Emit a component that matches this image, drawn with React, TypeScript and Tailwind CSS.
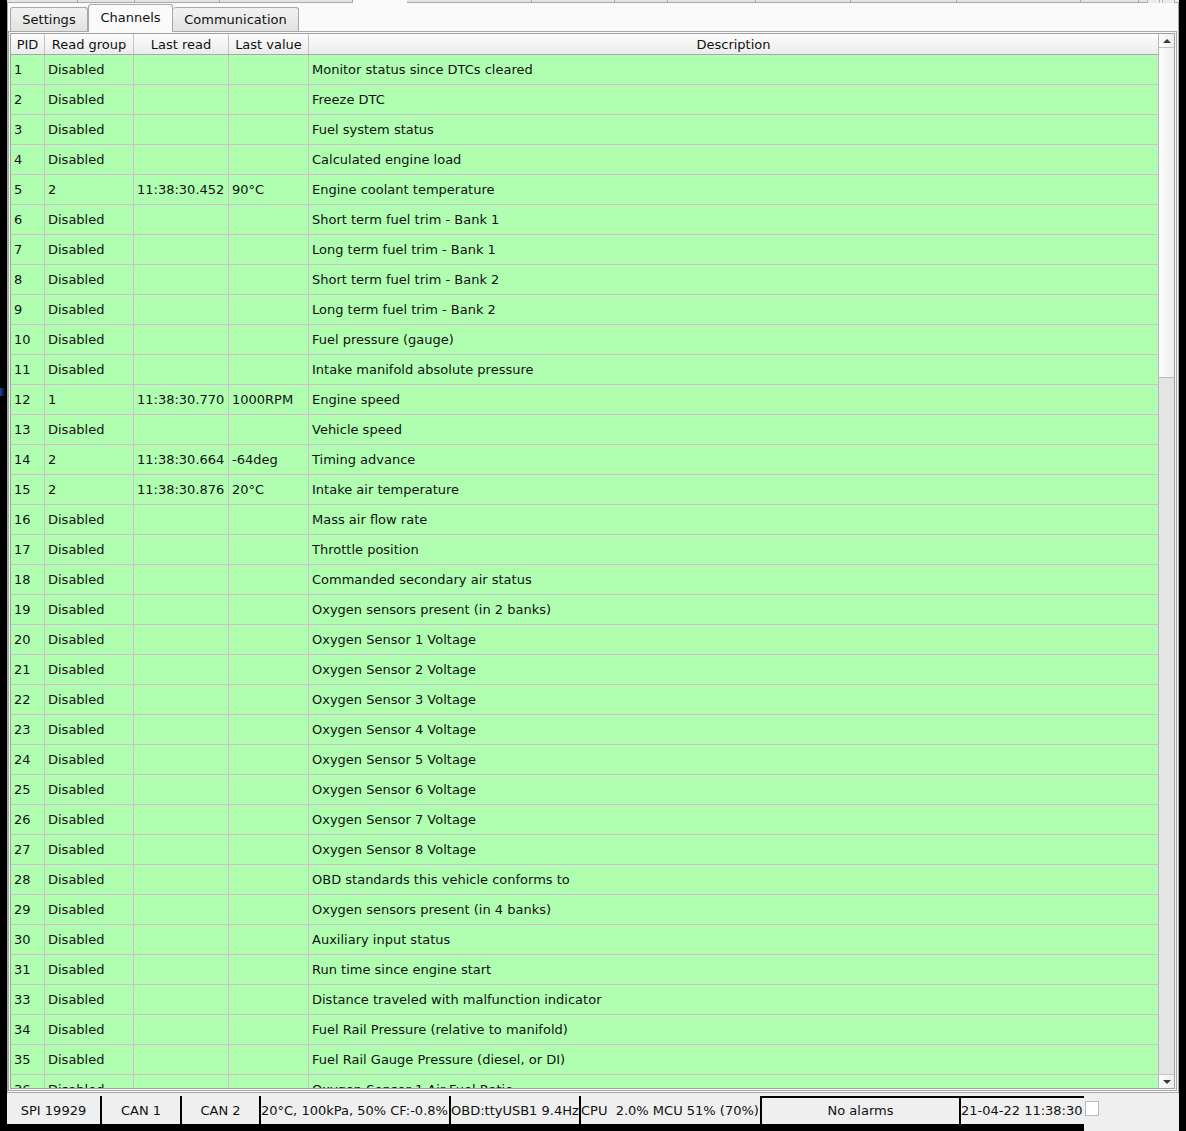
import React from "react";

type Row = { pid: number; group: string; lastRead: string; lastValue: string; desc: string };

const d = (pid: number, desc: string): Row => ({ pid, group: "Disabled", lastRead: "", lastValue: "", desc });

const rows: Row[] = [
  d(1, "Monitor status since DTCs cleared"),
  d(2, "Freeze DTC"),
  d(3, "Fuel system status"),
  d(4, "Calculated engine load"),
  { pid: 5, group: "2", lastRead: "11:38:30.452", lastValue: "90°C", desc: "Engine coolant temperature" },
  d(6, "Short term fuel trim - Bank 1"),
  d(7, "Long term fuel trim - Bank 1"),
  d(8, "Short term fuel trim - Bank 2"),
  d(9, "Long term fuel trim - Bank 2"),
  d(10, "Fuel pressure (gauge)"),
  d(11, "Intake manifold absolute pressure"),
  { pid: 12, group: "1", lastRead: "11:38:30.770", lastValue: "1000RPM", desc: "Engine speed" },
  d(13, "Vehicle speed"),
  { pid: 14, group: "2", lastRead: "11:38:30.664", lastValue: "-64deg", desc: "Timing advance" },
  { pid: 15, group: "2", lastRead: "11:38:30.876", lastValue: "20°C", desc: "Intake air temperature" },
  d(16, "Mass air flow rate"),
  d(17, "Throttle position"),
  d(18, "Commanded secondary air status"),
  d(19, "Oxygen sensors present (in 2 banks)"),
  d(20, "Oxygen Sensor 1 Voltage"),
  d(21, "Oxygen Sensor 2 Voltage"),
  d(22, "Oxygen Sensor 3 Voltage"),
  d(23, "Oxygen Sensor 4 Voltage"),
  d(24, "Oxygen Sensor 5 Voltage"),
  d(25, "Oxygen Sensor 6 Voltage"),
  d(26, "Oxygen Sensor 7 Voltage"),
  d(27, "Oxygen Sensor 8 Voltage"),
  d(28, "OBD standards this vehicle conforms to"),
  d(29, "Oxygen sensors present (in 4 banks)"),
  d(30, "Auxiliary input status"),
  d(31, "Run time since engine start"),
  d(33, "Distance traveled with malfunction indicator"),
  d(34, "Fuel Rail Pressure (relative to manifold)"),
  d(35, "Fuel Rail Gauge Pressure (diesel, or DI)"),
  d(36, "Oxygen Sensor 1 Air-Fuel Ratio"),
];

// widths of the clipped outer tab bar cells along the very top
const outerTabs = [71, 57, 85, 133];
const outerTabsRight = [125, 83, 53, 88, 95, 106, 124, 58];

const cell = "h-full flex items-center pl-[3px] border-r border-[#d2bed2] whitespace-nowrap overflow-hidden";
const head = "h-full flex items-center justify-center pt-px border-r border-[#c4c4c4] whitespace-nowrap";
const field = "h-[28px] bg-[#efefef] flex items-center pt-px whitespace-nowrap overflow-hidden";

export default function App() {
  return (
    <div className="w-[1186px] h-[1131px] bg-black flex font-['DejaVu_Sans',sans-serif] text-[13px] text-[#111] overflow-hidden">
      {/* desktop edge */}
      <div className="w-[7px] shrink-0">
        <div className="mt-[388px] h-[8px] bg-gradient-to-r from-[#2c55c8] to-black opacity-80" />
      </div>

      <div className="w-[1172px] shrink-0 flex flex-col bg-[#efefef]">
        {/* outer tab bar (clipped) */}
        <div className="h-[3px] flex">
          {outerTabs.map((w, i) => (
            <div key={i} style={{ width: w }} className="h-full bg-[#e4e4e4] border-r border-b border-[#a8a8a8]" />
          ))}
          <div className="w-[54px] h-full bg-[#fafafa]" />
          {outerTabsRight.map((w, i) => (
            <div key={i} style={{ width: w }} className="h-full bg-[#e4e4e4] border-r border-b border-[#a8a8a8]" />
          ))}
          <div className="w-[8px] h-full bg-[#e4e4e4] border-b border-[#a8a8a8]" />
          <div className="w-[13px] h-[4px] bg-[#ececec] border border-t-0 border-[#b4b4b4] rounded-b-[2px]" />
          <div className="w-[2px]" />
          <div className="w-[13px] h-[4px] bg-[#ececec] border border-t-0 border-[#b4b4b4] rounded-b-[2px]" />
          <div className="flex-1 h-full border-b border-[#a8a8a8]" />
        </div>

        {/* outer pane */}
        <div className="h-[1090px] bg-[#fafafa] border-l border-r border-b border-[#a8a8a8] flex flex-col">
          {/* inner tab bar */}
          <div className="h-[28px] flex items-end pl-[2px]">
            <div className="w-[78px] h-[24px] flex items-center justify-center pt-px border border-b-0 border-[#a8a8a8] rounded-t-[3px] bg-gradient-to-b from-[#f2f2f2] to-[#e2e2e2]">
              Settings
            </div>
            <div className="relative z-10 -mb-px w-[85px] h-[28px] flex items-center justify-center border border-b-0 border-[#a8a8a8] rounded-t-[3px] bg-[#fafafa] pb-[2px]">
              Channels
            </div>
            <div className="w-[126px] h-[24px] flex items-center justify-center pt-px border border-b-0 border-l-0 border-[#a8a8a8] rounded-t-[3px] bg-gradient-to-b from-[#f2f2f2] to-[#e2e2e2]">
              Communication
            </div>
          </div>

          {/* inner pane */}
          <div className="w-[1169px] h-[1060px] border border-[#a8a8a8] p-[1px]">
            <div className="h-full border border-[#a0a0a0] flex bg-white">
              {/* table */}
              <div className="w-[1147px] flex flex-col">
                <div className="h-[21px] shrink-0 flex border-b border-[#a8a8a8] bg-gradient-to-b from-[#fdfdfd] to-[#ebebeb]">
                  <div className={`w-[34px] ${head}`}>PID</div>
                  <div className={`w-[89px] ${head}`}>Read group</div>
                  <div className={`w-[95px] ${head}`}>Last read</div>
                  <div className={`w-[80px] ${head}`}>Last value</div>
                  <div className={`w-[849px] ${head} border-r-0`}>Description</div>
                </div>
                <div className="flex-1 overflow-hidden">
                  {rows.map((r) => (
                    <div key={r.pid} className="h-[30px] flex bg-[#b0ffb0] border-b border-[#d2bed2]">
                      <div className={`w-[34px] ${cell}`}>{r.pid}</div>
                      <div className={`w-[89px] ${cell}`}>{r.group}</div>
                      <div className={`w-[95px] ${cell}`}>{r.lastRead}</div>
                      <div className={`w-[80px] ${cell}`}>{r.lastValue}</div>
                      <div className={`w-[849px] ${cell} border-r-0`}>{r.desc}</div>
                    </div>
                  ))}
                </div>
              </div>

              {/* scrollbar */}
              <div className="w-[16px] flex flex-col border-l border-[#b8b8b8] bg-[#e4e4e4]">
                <div className="h-[14px] shrink-0 flex items-center justify-center bg-gradient-to-r from-[#fdfdfd] to-[#ededed] border-b border-[#c4c4c4]">
                  <div className="w-0 h-0 border-l-[4px] border-r-[4px] border-b-[4px] border-l-transparent border-r-transparent border-b-[#3a3a3a]" />
                </div>
                <div className="h-[330px] shrink-0 bg-gradient-to-r from-[#fefefe] to-[#eeeeee] border-b border-[#bcbcbc]" />
                <div className="flex-1" />
                <div className="h-[14px] shrink-0 flex items-center justify-center bg-gradient-to-r from-[#fdfdfd] to-[#ededed] border-t border-[#c4c4c4]">
                  <div className="w-0 h-0 border-l-[4px] border-r-[4px] border-t-[4px] border-l-transparent border-r-transparent border-t-[#3a3a3a]" />
                </div>
              </div>
            </div>
          </div>
        </div>

        {/* status bar */}
        <div className="h-[38px] flex items-start pt-[3px]">
          <div className="flex gap-[2px] bg-black pb-[7px]">
            <div className={`w-[93px] ${field} justify-center`}>SPI 19929</div>
            <div className={`w-[78px] ${field} justify-center`}>CAN 1</div>
            <div className={`w-[77px] ${field} justify-center`}>CAN 2</div>
            <div className={`w-[188px] ${field}`}>20°C, 100kPa, 50% CF:-0.8%</div>
            <div className={`w-[128px] ${field} bg-[#e8ffe8]`}>OBD:ttyUSB1 9.4Hz</div>
            <div className={`w-[179px] ${field} whitespace-pre`}>CPU  2.0% MCU 51% (70%)</div>
            <div className="w-[197px] h-[28px] bg-[#efefef] border-t-2 border-black flex items-center justify-center">No alarms</div>
            <div className="w-[123px] h-[28px] bg-[#efefef] border-t-2 border-black flex items-center whitespace-nowrap overflow-hidden">21-04-22 11:38:30</div>
          </div>
          <div className="ml-px mt-[5px] w-[14px] h-[15px] bg-white border border-[#b8b8b8]" />
        </div>
      </div>
    </div>
  );
}
